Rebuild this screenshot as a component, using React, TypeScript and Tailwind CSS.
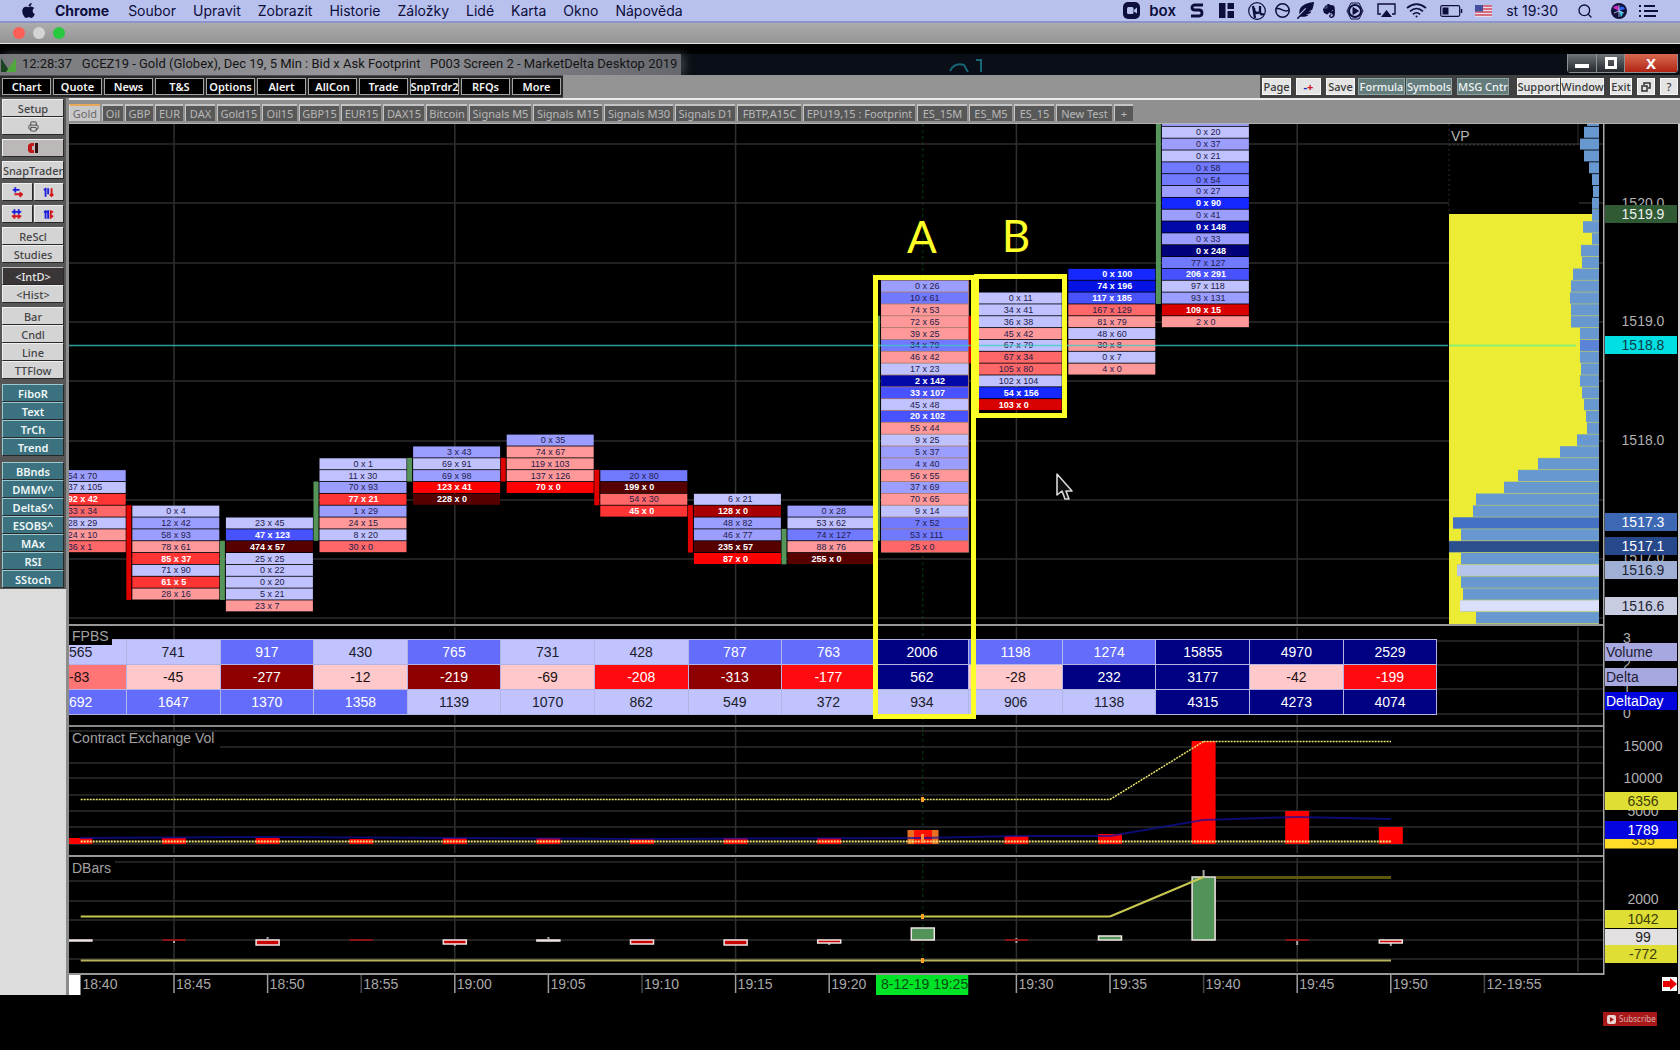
import React from "react";
import { Search, Printer } from "lucide-react";
import { FaApple, FaFeatherAlt, FaEvernote } from "react-icons/fa";

/* ---------- chart geometry ---------- */

const LEFT = 69;
const SPAN = 1534;
const px = (x: number) => `${((x - LEFT) / SPAN) * 100}%`;
const pw = (w: number) => `${(w / SPAN) * 100}%`;

const STEP = 93.6;
const colX = (i: number) => 80.4 + STEP * i;
const TICK = 11.84;
const rowY = (k: number) => 321.7 + TICK * k;

const GRID_X = [174, 454.8, 735.6, 1016.4, 1297.2, 1578];

const FILL: Record<string, string> = {
  b0: "#c0c2ff",
  b1: "#9c9eff",
  b2: "#7179ff",
  b3: "#4852ff",
  b4: "#1428ff",
  b5: "#0412e4",
  b6: "#0008a8",
  b7: "#000078",
  r0: "#ff9898",
  r1: "#ff6868",
  r2: "#ff3434",
  r3: "#ff0000",
  r4: "#d80000",
  r5: "#a80000",
  r6: "#560000",
};
const LIGHT_TEXT = new Set(["b3", "b4", "b5", "b6", "b7", "r2", "r3", "r4", "r5", "r6"]);

type Bar = { color: "g" | "r"; from: number; to: number };
type Footprint = { top: number; rows: string[]; bar?: Bar; marked?: boolean };

const FOOTPRINTS: Footprint[] = [
  { top: 13, rows: ["b1 54 x 70", "b0 37 x 105", "r2 92 x 42", "r1 33 x 34", "b0 28 x 29", "r0 24 x 10", "r1 36 x 1"] },
  {
    top: 16,
    bar: { color: "r", from: 16, to: 23 },
    rows: ["b0 0 x 4", "b1 12 x 42", "b1 58 x 93", "r0 78 x 61", "r2 85 x 37", "b0 71 x 90", "r2 61 x 5", "r0 28 x 16"],
  },
  {
    top: 17,
    bar: { color: "g", from: 19, to: 23 },
    rows: ["b0 23 x 45", "b3 47 x 123", "r6 474 x 57", "b0 25 x 25", "b0 0 x 22", "b0 0 x 20", "b0 5 x 21", "r0 23 x 7"],
  },
  {
    top: 12,
    bar: { color: "g", from: 14, to: 18 },
    rows: ["b0 0 x 1", "b0 11 x 30", "b1 70 x 93", "r2 77 x 21", "b1 1 x 29", "r0 24 x 15", "b0 8 x 20", "r1 30 x 0"],
  },
  { top: 11, bar: { color: "g", from: 12, to: 13 }, rows: ["b1 3 x 43", "b0 69 x 91", "b1 69 x 98", "r3 123 x 41", "r6 228 x 0"] },
  { top: 10, bar: { color: "r", from: 12, to: 13 }, rows: ["b1 0 x 35", "r0 74 x 67", "r0 119 x 103", "r0 137 x 126", "r3 70 x 0"] },
  { top: 13, bar: { color: "r", from: 13, to: 15 }, rows: ["b2 20 x 80", "r6 199 x 0", "r1 54 x 30", "r2 45 x 0"] },
  {
    top: 15,
    bar: { color: "r", from: 16, to: 19 },
    rows: ["b0 6 x 21", "r5 128 x 0", "b1 48 x 82", "b1 46 x 77", "r6 235 x 57", "r3 87 x 0"],
  },
  { top: 16, bar: { color: "g", from: 18, to: 20 }, rows: ["b1 0 x 28", "b0 53 x 62", "b2 74 x 127", "r0 88 x 76", "r6 255 x 0"] },
  {
    top: -3,
    marked: true,
    bar: { color: "g", from: 0, to: 18 },
    rows: [
      "b1 0 x 26", "b2 10 x 61", "r0 74 x 53", "r0 72 x 65", "r0 39 x 25", "b2 34 x 79", "r0 46 x 42", "b0 17 x 23",
      "b6 2 x 142", "b3 33 x 107", "b0 45 x 48", "b3 20 x 102", "r0 55 x 44", "b0 9 x 25", "b1 5 x 37", "b1 4 x 40",
      "r0 56 x 55", "b1 37 x 69", "r0 70 x 65", "b0 9 x 14", "b2 7 x 52", "b2 53 x 111", "r1 25 x 0",
    ],
  },
  {
    top: -2,
    bar: { color: "r", from: 0, to: 3 },
    rows: [
      "b0 0 x 11", "b0 34 x 41", "b0 36 x 38", "r0 45 x 42", "b0 67 x 79", "r1 67 x 34", "r1 105 x 80", "b0 102 x 104",
      "b4 54 x 156", "r4 103 x 0",
    ],
  },
  {
    top: -4,
    rows: [
      "b4 0 x 100", "b5 74 x 196", "b3 117 x 185", "r1 167 x 129", "r0 81 x 79", "b0 48 x 60", "r0 30 x 8", "b0 0 x 7",
      "r0 4 x 0",
    ],
  },
  {
    top: -17,
    bar: { color: "g", from: -17, to: -2 },
    rows: [
      "b1", "b0 0 x 20", "b1 0 x 37", "b0 0 x 21", "b2 0 x 58", "b2 0 x 54", "b1 0 x 27", "b4 0 x 90", "b1 0 x 41",
      "b6 0 x 148", "b1 0 x 33", "b7 0 x 248", "b2 77 x 127", "b3 206 x 291", "b0 97 x 118", "b1 93 x 131",
      "r4 109 x 15", "r0 2 x 0",
    ],
  },
];

/* left edge of each volume-profile bar, starting at row -17 */
const PROFILE = [
  1587, 1584, 1580, 1584, 1589, 1592, 1593, 1592, 1592, 1583, 1592, 1581, 1582, 1573, 1571, 1570, 1571, 1571, 1580,
  1580, 1580, 1581, 1580, 1582, 1584, 1586, 1587, 1577, 1560, 1538, 1518, 1504, 1476, 1473, 1453, 1461, 1449, 1461,
  1457, 1461, 1463, 1460, 1476,
];
const PROFILE_FILL: Record<number, string> = { 2: "#5b83d8", 17: "#4571c4", 19: "#2b4f8c", 21: "#b7c5ea", 24: "#dbe0fa" };

function FootprintColumn({ data, index }: { data: Footprint; index: number }) {
  const left = 132.3 + STEP * (index - 1);
  return (
    <g>
      {data.marked && (
        <rect x={px(left)} y={rowY(data.top - 0.5)} width={pw(88)} height={TICK * data.rows.length} fill="#a87868" />
      )}
      {data.bar && (
        <rect
          x={px(left - 6)}
          y={rowY(data.bar.from - 0.5)}
          width={pw(5)}
          height={TICK * (data.bar.to - data.bar.from + 1)}
          fill={data.bar.color === "g" ? "#55955a" : "#e00000"}
        />
      )}
      {data.rows.map((row, r) => {
        const [tone, ...rest] = row.split(" ");
        const label = rest.join(" ");
        const y = rowY(data.top + r);
        const light = LIGHT_TEXT.has(tone);
        return (
          <g key={r}>
            <rect x={px(left)} y={y - 5.5} width={pw(87)} height={11} fill={FILL[tone]} />
            {label && (
              <text
                x={px(left + 39 - 5 * rest[0].length)}
                y={y + 3}
                className={light ? "fill-white font-bold" : "fill-[#24204a]"}
              >
                {label}
              </text>
            )}
          </g>
        );
      })}
    </g>
  );
}

function GridX({ y1, y2, skipLast }: { y1: number; y2: number; skipLast?: boolean }) {
  return (
    <g stroke="#303030" strokeWidth={1.5}>
      {GRID_X.slice(0, skipLast ? -1 : undefined).map((x) => (
        <line key={x} x1={px(x)} x2={px(x)} y1={y1} y2={y2} />
      ))}
      <line x1={px(922.7)} x2={px(922.7)} y1={y1} y2={y2} stroke="#042c08" strokeDasharray="3 3" />
    </g>
  );
}

function GridY({ ys }: { ys: number[] }) {
  return (
    <g stroke="#2c2c2c" strokeWidth={1.5}>
      {ys.map((y) => (
        <line key={y} x1="0" x2="100%" y1={y} y2={y} />
      ))}
    </g>
  );
}

function Path({ pts, ...rest }: { pts: number[][] } & React.SVGProps<SVGLineElement>) {
  return (
    <>
      {pts.slice(1).map((p, i) => (
        <line key={i} x1={px(pts[i][0])} y1={pts[i][1]} x2={px(p[0])} y2={p[1]} {...rest} />
      ))}
    </>
  );
}

function PriceChart() {
  return (
    <svg className="block h-[500px] w-full" role="img" aria-label="Footprint chart">
      <g transform="translate(0,-124)">
        <GridX y1={124} y2={624} skipLast />
        <line x1={px(1578)} x2={px(1578)} y1={124} y2={212} stroke="#303030" />
        <GridY ys={[144, 203, 263, 322, 381, 441, 500, 559, 618]} />
        <rect x={px(1449)} y={145} width={pw(130)} height={70} fill="#000" />
        <line x1={px(1449)} x2={px(1578)} y1={145} y2={145} stroke="#3c3c3c" strokeDasharray="2 2" />
        <line x1={px(1449)} x2={px(1449)} y1={124} y2={214} stroke="#2a2a2a" strokeDasharray="2 3" />
        <text x={px(1451)} y={141} className="fill-[#b4b4b4] text-[14px]">VP</text>
        <rect x={px(1449)} y={214} width={pw(150)} height={410} fill="#ecec34" />
        {PROFILE.map((x, i) => {
          const k = i - 17;
          return (
            <g key={k}>
              {k >= -9 && <rect x={px(x)} y={rowY(k - 0.5)} width={pw(1599 - x)} height={TICK} fill="#a4bc84" />}
              <rect x={px(x)} y={rowY(k) - 5.5} width={pw(1599 - x)} height={11} fill={PROFILE_FILL[k] ?? "#6799d0"} />
            </g>
          );
        })}
        <g className="text-[9px]">
          {FOOTPRINTS.map((f, i) => (
            <FootprintColumn key={i} data={f} index={i} />
          ))}
        </g>
        <line x1="0" x2={px(1448)} y1={345.5} y2={345.5} stroke="#38d0c8" strokeWidth={1.5} opacity={0.75} />
        <line x1={px(1449)} x2={px(1576)} y1={345.5} y2={345.5} stroke="#8cf070" strokeWidth={2} />
      </g>
    </svg>
  );
}

/* ---------- FPBS table ---------- */

const N = {
  l: "bg-[#c0c3fd] text-[#1c1c2c]",
  m: "bg-[#646cfb] text-white",
  d: "bg-[#000082] text-white",
  p: "bg-[#ffc8cb] text-[#201010]",
  s: "bg-[#ff7474] text-[#201010]",
  k: "bg-[#8e0000] text-white",
  r: "bg-[#ff0a0e] text-white",
};
type Tone = keyof typeof N;
const STATS: { name: string; cells: [string, Tone][] }[] = [
  {
    name: "Volume",
    cells: [["565", "l"], ["741", "l"], ["917", "m"], ["430", "l"], ["765", "m"], ["731", "l"], ["428", "l"], ["787", "m"],
      ["763", "m"], ["2006", "d"], ["1198", "m"], ["1274", "m"], ["15855", "d"], ["4970", "d"], ["2529", "d"]],
  },
  {
    name: "Delta",
    cells: [["-83", "s"], ["-45", "p"], ["-277", "k"], ["-12", "p"], ["-219", "k"], ["-69", "p"], ["-208", "r"],
      ["-313", "k"], ["-177", "r"], ["562", "d"], ["-28", "p"], ["232", "d"], ["3177", "d"], ["-42", "p"], ["-199", "r"]],
  },
  {
    name: "DeltaDay",
    cells: [["692", "m"], ["1647", "m"], ["1370", "m"], ["1358", "m"], ["1139", "l"], ["1070", "l"], ["862", "l"],
      ["549", "l"], ["372", "l"], ["934", "l"], ["906", "l"], ["1138", "l"], ["4315", "d"], ["4273", "d"], ["4074", "d"]],
  },
];

function StatsPanel() {
  return (
    <div className="relative h-[99px]">
      <svg className="absolute inset-0 h-full w-full">
        <g transform="translate(0,-626)">
          <GridX y1={627} y2={724} />
          <GridY ys={[641, 665, 689, 714]} />
        </g>
      </svg>
      <div className="relative pt-[13px]">
        <table className="w-[89.2%] table-fixed border-collapse text-center text-[14px] leading-[22px]" aria-label="FPBS">
          <tbody>
            {STATS.map((row) => (
              <tr key={row.name}>
                {row.cells.map(([value, tone], i) => (
                  <td
                    key={i}
                    className={`h-[25px] border border-[#b4b4e4] p-0 ${N[tone]} ${i === 0 ? "w-[4.2%] border-l-0 text-left" : ""}`}
                  >
                    {value}
                  </td>
                ))}
              </tr>
            ))}
          </tbody>
        </table>
      </div>
      <h2 className="absolute left-0 top-[2px] bg-black px-[3px] text-[14px] leading-[17px] text-[#a0a0a0]">FPBS</h2>
    </div>
  );
}

/* ---------- lower studies ---------- */

const VOL_TOP = [838, 838, 838, 839, 838, 838, 839, 838, 838, 830, 836, 834, 741, 811, 827];

function VolumePanel() {
  return (
    <svg className="block h-[128px] w-full" role="img" aria-label="Contract exchange volume">
      <g transform="translate(0,-727)">
        <GridX y1={727} y2={853} />
        <GridY ys={[731, 747, 763, 778, 795, 811, 827, 844]} />
        <rect x="0" y={732} width={pw(151)} height={16} fill="#000" />
        <text x={px(72)} y={743} className="fill-[#a0a0a0] text-[14px]">Contract Exchange Vol</text>
        {VOL_TOP.map((y, i) => (
          <rect key={i} x={px(colX(i) - 12)} y={y} width={pw(24)} height={844 - y} fill="#ff0000" />
        ))}
        <rect x={px(907.5)} y={830} width={pw(31)} height={14} fill="#e87020" />
        <rect x={px(914)} y={830} width={pw(18)} height={14} fill="#ff1000" />
        <Path
          pts={[[80, 838], [260, 837], [640, 839], [922, 838], [1016, 836], [1110, 836], [1203, 820], [1297, 817], [1391, 819]]}
          stroke="#1010a0"
          strokeWidth={2}
          opacity={0.7}
        />
        <Path
          pts={[[80.7, 799.5], [1110, 799.5], [1203.6, 741.5], [1391, 741.5]]}
          stroke="#e8e46c"
          strokeWidth={1.5}
          strokeDasharray="2 1"
        />
        <Path pts={[[80.7, 841.5], [1391, 841.5]]} stroke="#f4e87c" strokeWidth={2} strokeDasharray="2 1" />
        <rect x={px(921)} y={797} width={3} height={5} fill="#ffa020" />
        <rect x={px(921)} y={834} width={3} height={9} fill="#ff9040" />
      </g>
    </svg>
  );
}

const DELTA_BARS: { i: number; y: number; h: number; kind: "w" | "r" | "g" | "line"; wick?: [number, number] }[] = [
  { i: 0, y: 940, h: 1, kind: "w" },
  { i: 1, y: 939, h: 2, kind: "line", wick: [940, 943] },
  { i: 2, y: 940, h: 5, kind: "r", wick: [937, 939] },
  { i: 3, y: 939, h: 2, kind: "line" },
  { i: 4, y: 940, h: 4, kind: "r", wick: [944, 946] },
  { i: 5, y: 940, h: 1, kind: "w", wick: [937, 939] },
  { i: 6, y: 940, h: 4, kind: "r" },
  { i: 7, y: 940, h: 5, kind: "r" },
  { i: 8, y: 940, h: 3, kind: "r", wick: [943, 945] },
  { i: 9, y: 928, h: 12, kind: "g" },
  { i: 10, y: 939, h: 2, kind: "line", wick: [938, 943] },
  { i: 11, y: 936, h: 4, kind: "g" },
  { i: 12, y: 877, h: 63, kind: "g", wick: [870, 877] },
  { i: 13, y: 939, h: 2, kind: "line", wick: [940, 945] },
  { i: 14, y: 940, h: 3, kind: "r", wick: [943, 946] },
];
const DELTA_FILL = { w: "#f0e0e0", r: "#c80000", g: "#52935a", line: "#8c1414" };

function DeltaPanel() {
  return (
    <svg className="block h-[116px] w-full" role="img" aria-label="Delta bars">
      <g transform="translate(0,-857)">
        <GridX y1={858} y2={972} />
        <GridY ys={[862, 881, 901, 920, 940, 959]} />
        <rect x="0" y={858} width={pw(46)} height={18} fill="#000" />
        <text x={px(72)} y={873} className="fill-[#a0a0a0] text-[14px]">DBars</text>
        {DELTA_BARS.map((b) => (
          <g key={b.i}>
            {b.wick && (
              <line x1={px(colX(b.i))} x2={px(colX(b.i))} y1={b.wick[0]} y2={b.wick[1]} stroke="#a8a8a8" strokeWidth={2} />
            )}
            <rect
              x={px(colX(b.i) - 11.5)}
              y={b.y}
              width={pw(23)}
              height={b.h}
              fill={DELTA_FILL[b.kind]}
              stroke={b.kind === "line" ? "none" : "#f0e4e4"}
              strokeWidth={1.5}
            />
          </g>
        ))}
        <Path pts={[[80.7, 916.5], [1110, 916.5], [1203.6, 877]]} stroke="#c8c850" strokeWidth={2} />
        <Path pts={[[1216, 877.5], [1391, 877.5]]} stroke="#5c5810" strokeWidth={3} />
        <Path pts={[[80.7, 960.5], [1391, 960.5]]} stroke="#b8b45c" strokeWidth={2} />
        <rect x={px(921)} y={914} width={3} height={5} fill="#ffa020" />
        <rect x={px(921)} y={958} width={3} height={5} fill="#ffa020" />
      </g>
    </svg>
  );
}

const TIMES = ["18:40", "18:45", "18:50", "18:55", "19:00", "19:05", "19:10", "19:15", "19:20", "", "19:30", "19:35", "19:40",
  "19:45", "19:50", "12-19:55"];

function TimeAxis() {
  return (
    <svg className="block h-[20px] w-full" role="img" aria-label="Time axis">
      <rect x="0" y="0" width={pw(11.5)} height={20} fill="#fff" />
      {TIMES.map((t, i) =>
        t ? (
          <g key={t}>
            {i > 0 && (
              <line x1={px(colX(i))} x2={px(colX(i))} y1={0} y2={18} stroke={i % 3 ? "#9c9c9c" : "#484848"} strokeWidth={1.5} />
            )}
            <text x={px(colX(i) + 2)} y={14} className="fill-[#a8a8a8] text-[14px]">{t}</text>
          </g>
        ) : null,
      )}
      <svg x={px(876)} y="0" width={pw(92.5)} height="20">
        <rect width="100%" height="20" fill="#00e428" />
        <text x="5" y="14" className="fill-[#064c10] text-[14px]">8-12-19 19:25</text>
      </svg>
    </svg>
  );
}

/* ---------- price axis ---------- */

type Tag = { t: string; y: number; h?: number; bg?: string; fg?: string; x?: number; left?: boolean };
const TAGS: Tag[] = [
  { t: "1520.0", y: 203 },
  { t: "1519.9", y: 214, bg: "#2f5a33", fg: "#f0f0f0" },
  { t: "1519.0", y: 321 },
  { t: "1518.8", y: 345, bg: "#00e0e4", fg: "#083c44" },
  { t: "1518.0", y: 440 },
  { t: "1517.0", y: 557 },
  { t: "1517.3", y: 522, bg: "#3c68b4", fg: "#fff" },
  { t: "1517.1", y: 546, bg: "#27488a", fg: "#fff" },
  { t: "1516.9", y: 570, bg: "#a0b0d4", fg: "#1c2434" },
  { t: "1516.6", y: 606, bg: "#c8cce0", fg: "#1c2434" },
  { t: "3", y: 638, x: 24 },
  { t: "2", y: 664, x: 24 },
  { t: "1", y: 689, x: 24 },
  { t: "0", y: 713, x: 24 },
  { t: "Volume", y: 652, bg: "#a8a8e0", fg: "#1c1c34", left: true },
  { t: "Delta", y: 677, bg: "#a8a8e0", fg: "#1c1c34", left: true },
  { t: "DeltaDay", y: 701, bg: "#0404dc", fg: "#fff", left: true },
  { t: "15000", y: 746 },
  { t: "10000", y: 778 },
  { t: "5000", y: 811 },
  { t: "6356", y: 801, bg: "#dede34", fg: "#3c3c08" },
  { t: "355", y: 840, h: 17, bg: "#ffdc28", fg: "#5c4c08" },
  { t: "1789", y: 830, bg: "#0404e0", fg: "#fff" },
  { t: "2000", y: 899 },
  { t: "1042", y: 919, bg: "#dede34", fg: "#3c3c08" },
  { t: "99", y: 937, h: 16, bg: "#e2e0e0", fg: "#202020" },
  { t: "-772", y: 954, bg: "#dede34", fg: "#3c3c08" },
];

function PriceAxis() {
  return (
    <svg className="block h-[870px] w-[77px] shrink-0" role="img" aria-label="Price axis">
      <g transform="translate(0,-124)">
        {TAGS.map((tag) => {
          const h = tag.h ?? 18;
          return (
            <g key={tag.t}>
              {tag.bg && <rect x={2} y={tag.y - h / 2} width={72} height={h} fill={tag.bg} />}
              <text
                x={tag.left ? 3 : (tag.x ?? 40)}
                y={tag.y + 5}
                textAnchor={tag.left ? "start" : "middle"}
                fill={tag.fg ?? "#b0b0b0"}
                className="text-[14px]"
              >
                {tag.t}
              </text>
            </g>
          );
        })}
        <rect x={0} y={124} width={1.5} height={851} fill="#a8a8a8" />
        <rect x={75} y={124} width={2} height={870} fill="#d0d0d0" />
        <rect x={59} y={977} width={15} height={14} fill="#fff" />
        <path d="M60 981h7v-3l7 6-7 6v-3h-7z" fill="#e80000" />
      </g>
    </svg>
  );
}

/* ---------- annotations over the chart ---------- */

function Annotations() {
  return (
    <svg className="pointer-events-none absolute inset-0 h-full w-full" aria-hidden="true">
      <g transform="translate(0,-124)">
        <g fill="none" stroke="#ffff28" strokeWidth={5}>
          <rect x={px(875.5)} y={277.5} width={pw(98)} height={439} />
          <rect x={px(976.5)} y={276.5} width={pw(88)} height={139} />
        </g>
        <g className="fill-[#ffff28] font-['Lato',sans-serif] text-[44px]" textAnchor="middle">
          <text x={px(922)} y={253}>A</text>
          <text x={px(1016)} y={252}>B</text>
        </g>
        <svg x={px(1056)} y={473} width="20" height="30" viewBox="0 0 20 30">
          <path
            d="M1 1v21l5-4 3 8h4l-3-8h6z"
            fill="#101010"
            stroke="#d8d8d8"
            strokeWidth="1.6"
            strokeLinejoin="round"
          />
        </svg>
      </g>
    </svg>
  );
}

/* ---------- macOS menu bar ---------- */

const MENU = ["Soubor", "Upravit", "Zobrazit", "Historie", "Záložky", "Lidé", "Karta", "Okno", "Nápověda"];

function MacMenuBar() {
  return (
    <header className="flex h-[23px] items-center border-b-2 border-[#8c94cc] bg-[#b8c0ee] font-['Inter',sans-serif] text-[14px] leading-[20px] text-[#0c0e3c]">
      <FaApple className="ml-[20px] size-[17px]" />
      <nav className="ml-[18px] flex gap-[17px]">
        <button className="mr-[2px] font-bold">Chrome</button>
        {MENU.map((m) => (
          <button key={m}>{m}</button>
        ))}
      </nav>
      <div className="ml-auto flex items-center pr-[22px]">
        <svg className="size-[17px]" viewBox="0 0 17 17">
          <rect width="17" height="17" rx="5" fill="currentColor" />
          <rect x="4" y="5" width="6.5" height="7" rx="1.5" fill="#b8c0ee" />
          <path d="M11 8l3-2.500v6L11 9.500z" fill="#b8c0ee" />
        </svg>
        <span className="ml-[9px] w-[28px] text-[15px] font-semibold">box</span>
        <svg className="ml-[13px] h-[15px] w-[14px]" viewBox="0 0 14 15" fill="none" stroke="currentColor" strokeWidth="2.800">
          <path d="M13 2H5C1 2 1 7 5 7h4c4 0 4 6 0 6H1" />
        </svg>
        <svg className="ml-[15px] h-[15px] w-[15px]" viewBox="0 0 15 15" fill="currentColor">
          <path d="M0 0h6.500v15H0zM8.500 0H15v6H8.500zM8.500 8H15v7H8.500z" />
        </svg>
        <svg className="ml-[14px] size-[18px]" viewBox="0 0 18 18" fill="none" stroke="currentColor">
          <circle cx="9" cy="9" r="8.300" strokeWidth="1.200" />
          <path d="M5 4l2 12M6 6c0 6 5 6 6 3V4m0 5c0 3 1 4 4 3" strokeWidth="2.300" />
        </svg>
        <svg className="ml-[9px] size-[15px]" viewBox="0 0 15 15" fill="none" stroke="currentColor" strokeWidth="1.500">
          <circle cx="7.500" cy="7.500" r="6.700" />
          <path d="M1 6c4-3 8 5 13 1" />
        </svg>
        <FaFeatherAlt className="ml-[6px] h-[17px] w-[19px]" />
        <FaEvernote className="ml-[6px] size-[16px]" />
        <svg className="ml-[9px] size-[18px]" viewBox="0 0 18 18" fill="none" stroke="currentColor">
          <path d="M5 1h8l4 8-4 8H5L1 9z" strokeWidth="1" />
          <circle cx="9" cy="9" r="6" strokeWidth="2" />
          <path d="M7 5.500L12.500 9 7 12.500z" fill="currentColor" />
        </svg>
        <svg className="ml-[13px] h-[15px] w-[19px]" viewBox="0 0 19 15">
          <path d="M4 11H1V1h17v10h-3" fill="none" stroke="currentColor" strokeWidth="1.400" />
          <path d="M9.500 7l5.500 7H4z" fill="currentColor" />
        </svg>
        <svg className="ml-[10px] h-[15px] w-[21px]" viewBox="0 0 21 15" fill="none" stroke="currentColor" strokeWidth="1.700">
          <path d="M1 5c6-5 13-5 19 0M4 8.300c4-3.500 9-3.500 13 0M7 11.300c2-2 5-2 7 0" />
          <circle cx="10.500" cy="13.500" r="1" fill="currentColor" stroke="none" />
        </svg>
        <svg className="ml-[13px] h-[12px] w-[23px]" viewBox="0 0 23 12">
          <rect x=".7" y=".7" width="19" height="10.600" rx="1.500" fill="none" stroke="currentColor" strokeWidth="1.200" />
          <rect x="2.500" y="2.500" width="6" height="7" fill="currentColor" />
          <path d="M21.500 4v4" stroke="currentColor" strokeWidth="1.500" />
        </svg>
        <svg className="ml-[12px] h-[12px] w-[17px]" viewBox="0 0 17 12">
          <rect width="17" height="12" fill="#e8dcec" />
          <path d="M0 1h17M0 4h17M0 7h17M0 10h17" stroke="#d04858" strokeWidth="1.500" />
          <rect width="8" height="6.500" fill="#44509c" />
        </svg>
        <time className="ml-[14px]">st 19:30</time>
        <Search className="ml-[19px] size-[16px]" strokeWidth={2} />
        <svg className="ml-[18px] size-[16px]" viewBox="0 0 16 16">
          <circle cx="8" cy="8" r="8" fill="#101038" />
          <path d="M2 5c3-4 7-3 6 3z" fill="#c02cc0" />
          <path d="M14 6c-2-4-6-3-6 2z" fill="#3060f0" />
          <path d="M8 8c4 0 5 3 2 6z" fill="#30c8e0" />
          <path d="M8 2v12M3 10l5-2 5 2" stroke="#c8d8ff" strokeWidth=".8" fill="none" />
        </svg>
        <svg className="ml-[12px] h-[12px] w-[19px]" viewBox="0 0 19 12" stroke="currentColor" strokeWidth="1.800">
          <path d="M0 1h2M5 1h11M0 6h2M5 6h14M0 11h2M5 11h12" />
        </svg>
      </div>
    </header>
  );
}

/* ---------- application chrome ---------- */

function TitleBar() {
  return (
    <div className="flex h-[21px] bg-[#0a0e16]">
      <div className="flex items-center bg-linear-to-r from-[#77787c] via-[#98989c] to-[#66686e] pr-[4px] text-[13px] leading-[18px] whitespace-pre text-[#141414] shadow-[4px_0_8px_#3a3d44]">
        <svg className="h-[14px] w-[16px]" viewBox="0 0 16 14">
          <path d="M1 0l9 14H1z" fill="#1c4424" />
          <path d="M16 0v14H6z" fill="#50a83c" />
        </svg>
        <h1 className="pb-px pl-[6px] font-['Roboto',sans-serif]">
          12:28:37{"   "}GCEZ19 - Gold (Globex), Dec 19, 5 Min : Bid x Ask Footprint{"   "}P003 Screen 2 - MarketDelta Desktop 2019
        </h1>
      </div>
      <svg className="ml-[265px] h-[21px] w-[40px]" viewBox="0 0 40 21" fill="none" stroke="#1c7c94" strokeWidth="2">
        <path d="M4 17c3-6 7-8 14-6l4 7M30 6h5v12" opacity=".8" />
      </svg>
      <div className="ml-auto flex h-[19px] gap-px rounded-b border border-t-0 border-[#8c9094] bg-[#8c9094] text-white">
        <button aria-label="Minimize" className="flex w-[28px] items-end justify-center bg-linear-to-b from-[#70757a] to-[#24282c] pb-[4px]">
          <span className="h-[4px] w-[14px] bg-white" />
        </button>
        <button aria-label="Restore" className="flex w-[27px] items-center justify-center bg-linear-to-b from-[#70757a] to-[#24282c]">
          <span className="size-[12px] border-[3px] border-white" />
        </button>
        <button aria-label="Close" className="w-[52px] bg-linear-to-b from-[#d86850] to-[#b02010] text-[15px] leading-[16px] font-bold">
          X
        </button>
      </div>
      <div className="w-[2px] bg-[#101418]" />
    </div>
  );
}

const TOOLS = ["Chart", "Quote", "News", "T&S", "Options", "Alert", "AllCon", "Trade", "SnpTrdr2", "RFQs", "More"];
const LIGHT_BTN = "border-[#f8f8f8] bg-[#e4e4e4] text-[#383838]";
const TEAL_BTN = "border-[#90a4a4] bg-[#647c7c] text-[#f0f4f4]";
const RIGHT_TOOLS: [React.ReactNode, string, string][] = [
  ["Page", "w-[29px] " + LIGHT_BTN, "Page"],
  [<span key="pm"><b className="text-[#2020c0]">-</b><b className="text-[#d01020]">+</b></span>, "ml-[4px] w-[25px] " + LIGHT_BTN, "Zoom"],
  ["Save", "ml-[4px] w-[29px] " + LIGHT_BTN, "Save"],
  ["Formula", "ml-[2px] w-[47px] " + TEAL_BTN, "Formula"],
  ["Symbols", "w-[46px] " + TEAL_BTN, "Symbols"],
  ["MSG Cntr", "ml-[4px] w-[52px] " + TEAL_BTN, "MSG Cntr"],
  ["Support", "ml-[7px] w-[43px] " + LIGHT_BTN, "Support"],
  ["Window", "w-[43px] " + LIGHT_BTN, "Window"],
  ["Exit", "ml-[5px] w-[22px] " + LIGHT_BTN, "Exit"],
  [
    <svg key="w" className="size-[10px]" viewBox="0 0 10 10" fill="none" stroke="#303030" strokeWidth="1.500">
      <path d="M3 3V1h6v5H7M1 4h5v5H1z" />
    </svg>,
    "ml-[4px] w-[18px] " + LIGHT_BTN,
    "Windows",
  ],
  ["?", "ml-[4px] w-[18px] " + LIGHT_BTN, "Help"],
];

function ToolBar() {
  return (
    <div className="flex h-[23px] bg-[#949494] text-[11px] leading-[14px]">
      <div className="flex gap-[2px] border-y border-[#505050] bg-[#282828] px-[2px] py-[2px]">
        {TOOLS.map((t) => (
          <button key={t} className="flex w-[49px] items-center justify-center border border-[#a4a4a4] bg-black font-semibold text-[#f4f4f4]">
            {t}
          </button>
        ))}
      </div>
      <div className="ml-auto flex gap-px bg-[#404040] py-[3px] pr-[2px] pl-[2px]">
        {RIGHT_TOOLS.map(([label, cls, name]) => (
          <button key={name} aria-label={name} className={"flex items-center justify-center border font-medium " + cls}>
            {label}
          </button>
        ))}
      </div>
    </div>
  );
}

const TABS: [string, string][] = [
  ["Gold", "w-[31px]"], ["Oil", "w-[21px]"], ["GBP", "w-[28px]"], ["EUR", "w-[28px]"], ["DAX", "w-[30px]"],
  ["Gold15", "w-[43px]"], ["Oil15", "w-[35px]"], ["GBP15", "w-[40px]"], ["EUR15", "w-[40px]"], ["DAX15", "w-[41px]"],
  ["Bitcoin", "w-[41px]"], ["Signals M5", "w-[62px]"], ["Signals M15", "w-[69px]"], ["Signals M30", "w-[69px]"],
  ["Signals D1", "w-[60px]"], ["FBTP,A15C", "w-[64px]"], ["EPU19,15 : Footprint", "w-[112px]"], ["ES_15M", "w-[50px]"],
  ["ES_M5", "w-[43px]"], ["ES_15", "w-[40px]"], ["New Test", "w-[56px]"], ["+", "w-[19px]"],
];

function TabStrip() {
  return (
    <div role="tablist" className="flex h-[26px] items-end gap-[2px] border-t-2 border-b border-t-[#ececec] border-b-[#b0b0b0] bg-[#909090] pb-[2px] text-[11px] leading-[14px]">
      {TABS.map(([name, w], i) => (
        <button
          key={name}
          role="tab"
          aria-selected={i === 0}
          className={
            "flex h-[17px] shrink-0 items-center justify-center border-t-2 border-l whitespace-nowrap " +
            w +
            (i === 0
              ? " border-t-[#e8a858] border-l-[#d8d8d8] bg-[#c8c8c8] text-[#686868]"
              : " border-[#c4c4c4] bg-[#585858] text-[#b8b8b8]")
          }
        >
          {name}
        </button>
      ))}
    </div>
  );
}

function ArrowsIcon({ kind }: { kind: number }) {
  const paths = [
    ["M2 3h8M5 0v6", "M4 8h9M10 6l3 2-3 3"],
    ["M3 1v10M6 1v7M1 3l3-2", "M10 1v9M8 8l2 2 2-2"],
    ["M1 3h11M4 0v6M9 0v6", "M1 8h11M4 6v5M9 6v5"],
    ["M3 1v10M6 1v10M1 3h5", "M8 3h4M8 8h4M9 1v10"],
  ][kind];
  return (
    <svg className="h-[11px] w-[12px]" viewBox="0 0 14 12" fill="none" strokeWidth="2.200">
      <path d={paths[0]} stroke="#1c20dc" />
      <path d={paths[1]} stroke="#d4141c" />
    </svg>
  );
}

const LIGHT = "border-[#f0f0f0] bg-[#d4d4d4] text-[#444]";
const TEAL = "border-[#9cc8d0] bg-[#3c7280] text-[#f0f8f8] font-semibold";

function SideButton({ children, label, tone = LIGHT }: { children: React.ReactNode; label?: string; tone?: string }) {
  return (
    <button
      aria-label={label}
      className={"flex h-[17px] w-full items-center justify-center border-t border-l text-[11px] leading-[15px] font-medium shadow-[1px_1px_0_#282828] " + tone}
    >
      {children}
    </button>
  );
}

function SideBar() {
  return (
    <aside className="flex w-[66px] shrink-0 flex-col bg-[#dcdcdc]">
      <div className="flex flex-col gap-[5px] bg-[#565656] pt-px pr-[3px] pb-[2px] pl-[2px]">
        <div className="flex flex-col gap-px">
          <SideButton>Setup</SideButton>
          <SideButton label="Print"><Printer className="size-[11px]" /></SideButton>
        </div>
        <SideButton label="Link" tone="border-[#f0f0f0] bg-[#bcb8b8]">
          <svg className="h-[10px] w-[11px]" viewBox="0 0 11 10">
            <path d="M6 0H3L0 2v6l2 2h4V7H4V3h2z" fill="#c01818" />
            <path d="M7 0h3v10H7z" fill="#301010" />
          </svg>
        </SideButton>
        <SideButton>SnapTrader</SideButton>
        {[0, 2].map((k) => (
          <div key={k} className="flex gap-[2px]">
            <SideButton label={`Spacing ${k + 1}`}><ArrowsIcon kind={k} /></SideButton>
            <SideButton label={`Spacing ${k + 2}`}><ArrowsIcon kind={k + 1} /></SideButton>
          </div>
        ))}
        <div className="flex flex-col gap-px">
          <SideButton>ReScl</SideButton>
          <SideButton>Studies</SideButton>
        </div>
        <div className="flex flex-col gap-px">
          <SideButton tone="border-[#c0c0c0] bg-[#3a3638] text-[#e8e8e8]">&lt;IntD&gt;</SideButton>
          <SideButton>&lt;Hist&gt;</SideButton>
        </div>
        <div className="flex flex-col gap-px">
          {["Bar", "Cndl", "Line", "TTFlow"].map((b) => (
            <SideButton key={b}>{b}</SideButton>
          ))}
        </div>
        <div className="flex flex-col gap-px pt-px">
          {["FiboR", "Text", "TrCh", "Trend"].map((b) => (
            <SideButton key={b} tone={TEAL}>{b}</SideButton>
          ))}
        </div>
        <div className="flex flex-col gap-px pt-[2px]">
          {["BBnds", "DMMV^", "DeltaS^", "ESOBS^", "MAx", "RSI", "SStoch"].map((b) => (
            <SideButton key={b} tone={TEAL}>{b}</SideButton>
          ))}
        </div>
      </div>
    </aside>
  );
}

export default function App() {
  return (
    <div className="flex min-h-screen flex-col overflow-x-hidden bg-black font-['Noto_Sans',sans-serif]">
      <MacMenuBar />
      <div className="flex h-[21px] items-center gap-[8px] border-b border-[#e4e4e4] bg-linear-to-b from-[#acacac] to-[#949494] pl-[13px]">
        <button aria-label="Close window" className="size-[12px] rounded-full bg-[#ff5f57]" />
        <button aria-label="Minimize window" className="size-[12px] rounded-full bg-[#d4d4d4]" />
        <button aria-label="Zoom window" className="size-[12px] rounded-full bg-[#28c840]" />
      </div>
      <main className="mt-[10px] flex flex-col">
        <TitleBar />
        <ToolBar />
        <div className="flex">
          <SideBar />
          <div className="flex min-w-0 flex-1 flex-col border-l-3 border-[#8c8c8c]">
            <TabStrip />
            <div className="flex font-['Liberation_Sans',sans-serif]">
              <div className="relative min-w-0 flex-1 overflow-hidden">
                <div className="border-b-2 border-[#989898]"><PriceChart /></div>
                <div className="border-b-2 border-[#888]"><StatsPanel /></div>
                <div className="border-b-2 border-[#989898]"><VolumePanel /></div>
                <div className="border-b-2 border-[#989898]"><DeltaPanel /></div>
                <TimeAxis />
                <Annotations />
              </div>
              <PriceAxis />
            </div>
          </div>
        </div>
      </main>
      <footer className="flex justify-end pt-[17px] pr-[23px]">
        <button className="flex h-[14px] w-[54px] items-center gap-[3px] bg-[#a81818] pl-[4px] text-[8px] leading-[14px] text-[#d8b0b0]">
          <svg className="size-[9px]" viewBox="0 0 9 9">
            <rect width="9" height="9" rx="2" fill="#ecd4d4" />
            <path d="M3 2l4 2.500L3 7z" fill="#a81818" />
          </svg>
          Subscribe
        </button>
      </footer>
    </div>
  );
}
